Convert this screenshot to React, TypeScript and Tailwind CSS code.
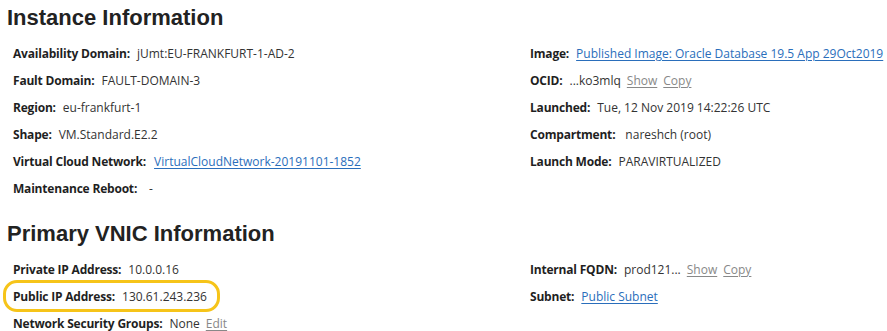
import React from 'react'

type Field = { label: string; value?: string; link?: string; actions?: string[]; gap?: string }

function Row({ f }: { f: Field }) {
  return (
    <div className="flex h-[27px] items-center whitespace-nowrap">
      <span className="font-bold text-[#1f1f1f] tracking-[-0.2px]">{f.label}</span>
      <span className={f.gap ?? 'ml-[7px]'}>
        {f.link ? (
          <a className="text-[#2a6ebb] underline underline-offset-2 decoration-1">{f.link}</a>
        ) : (
          <span className="text-[#333]">{f.value}</span>
        )}
      </span>
      {f.actions?.map(a => (
        <a key={a} className="ml-[6px] text-[#888] underline underline-offset-2 decoration-1">
          {a}
        </a>
      ))}
    </div>
  )
}

const instanceLeft: Field[] = [
  { label: 'Availability Domain:', value: 'jUmt:EU-FRANKFURT-1-AD-2' },
  { label: 'Fault Domain:', value: 'FAULT-DOMAIN-3' },
  { label: 'Region:', value: 'eu-frankfurt-1' },
  { label: 'Shape:', value: 'VM.Standard.E2.2' },
  { label: 'Virtual Cloud Network:', link: 'VirtualCloudNetwork-20191101-1852', gap: 'ml-[8px]' },
  { label: 'Maintenance Reboot:', value: '-', gap: 'ml-[12px]' },
]

const instanceRight: Field[] = [
  { label: 'Image:', link: 'Published Image: Oracle Database 19.5 App 29Oct2019' },
  { label: 'OCID:', value: '...ko3mlq', actions: ['Show', 'Copy'] },
  { label: 'Launched:', value: 'Tue, 12 Nov 2019 14:22:26 UTC' },
  { label: 'Compartment:', value: 'nareshch (root)', gap: 'ml-[10px]' },
  { label: 'Launch Mode:', value: 'PARAVIRTUALIZED' },
]

const vnicLeft: Field[] = [
  { label: 'Private IP Address:', value: '10.0.0.16' },
  { label: 'Public IP Address:', value: '130.61.243.236' },
  { label: 'Network Security Groups:', value: 'None', actions: ['Edit'] },
]

const vnicRight: Field[] = [
  { label: 'Internal FQDN:', value: 'prod121...', actions: ['Show', 'Copy'] },
  { label: 'Subnet:', link: 'Public Subnet' },
]

function Section({ title, left, right, highlight }: { title: string; left: Field[]; right: Field[]; highlight?: number }) {
  return (
    <section>
      <h2 className="pl-[7px] text-[22px] leading-[34px] font-bold text-[#222] font-['Liberation_Sans',Arial,sans-serif]">
        {title}
      </h2>
      <div className="mt-[5px] flex pl-[13px]">
        <div className="w-[517px]">
          {left.map((f, i) => (
            <div key={f.label} className="relative">
              {i === highlight && (
                <div className="absolute left-[-10px] top-[-3px] h-[32px] w-[217px] rounded-[14px] border-[3px] border-[#f6c419]" />
              )}
              <Row f={f} />
            </div>
          ))}
        </div>
        <div>
          {right.map(f => (
            <Row key={f.label} f={f} />
          ))}
        </div>
      </div>
    </section>
  )
}

export default function App() {
  return (
    <div className="h-[331px] w-[887px] overflow-hidden bg-white pt-[1px] text-[12px] font-['Open_Sans','Noto_Sans',sans-serif]">
      <Section title="Instance Information" left={instanceLeft} right={instanceRight} />
      <div className="h-[15px]" />
      <Section title="Primary VNIC Information" left={vnicLeft} right={vnicRight} highlight={1} />
    </div>
  )
}
